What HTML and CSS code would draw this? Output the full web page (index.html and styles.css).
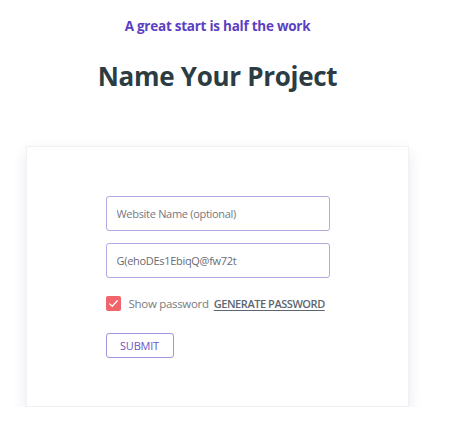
FILE: index.html
```html
<!DOCTYPE html>
<html lang="en">
<head>
<meta charset="utf-8">
<link rel="stylesheet" href="styles.css">
</head>
<body>
<div class="page">
  <p class="eyebrow">A great start is half the work</p>
  <h1 class="title">Name Your Project</h1>
  <div class="card">
    <form class="form">
      <input class="field" type="text" placeholder="Website Name (optional)">
      <input class="field field-value" type="text" value="G(ehoDEs1EbiqQ@fw72t">
      <div class="row">
        <span class="check"><svg viewBox="0 0 16 16" width="11" height="11"><path d="M2.5 8.5 L6.2 12 L13.5 4" fill="none" stroke="#fff" stroke-width="1.8" stroke-linecap="round" stroke-linejoin="round"/></svg></span>
        <span class="label">Show password</span>
        <a class="gen">GENERATE PASSWORD</a>
      </div>
      <button class="submit" type="button">SUBMIT</button>
    </form>
  </div>
</div>
</body>
</html>
```
FILE: styles.css
```css
* { box-sizing: border-box; }
html, body { margin: 0; padding: 0; background: #fff; }
body { font-family: "Open Sans", "Noto Sans", sans-serif; }
.page { width: 435px; display: flex; flex-direction: column; align-items: center; }
.eyebrow { margin: 16px 0 0; font-size: 13.5px; line-height: 20px; font-weight: 700; color: #5c3fbf; letter-spacing: -0.25px; }
.title { margin: 23px 0 0; font-size: 26px; line-height: 34px; font-weight: 700; color: #2b3c43; letter-spacing: -0.3px; }
.card { margin-top: 53px; width: 383px; height: 261px; border: 1px solid #f0f0f6; background: #fff; box-shadow: 0 6px 14px rgba(40, 40, 80, 0.1); display: flex; justify-content: center; padding-top: 49px; }
.form { width: 224px; display: flex; flex-direction: column; }
.field { width: 224px; height: 35px; border: 1px solid #b4a8e2; border-radius: 3px; padding: 0 10px; font-family: inherit; font-size: 11px; letter-spacing: -0.3px; color: #6b6b75; outline: none; }
.field::placeholder { color: #77777f; }
.field + .field { margin-top: 12px; }
.row { margin-top: 18px; display: flex; align-items: center; height: 15px; white-space: nowrap; }
.check { flex: none; width: 15px; height: 15px; background: #f0646b; border-radius: 2px; display: flex; align-items: center; justify-content: center; }
.label { margin-left: 8px; font-size: 11.5px; letter-spacing: -0.3px; color: #7a7a82; }
.gen { margin-left: 5px; font-size: 11px; font-weight: 600; letter-spacing: -0.45px; color: #5d6670; text-decoration: underline; text-underline-offset: 2px; }
.submit { margin-top: 22px; width: 68px; height: 25px; border: 1px solid #a393dc; border-radius: 3px; background: #fff; font-family: inherit; font-size: 11px; letter-spacing: -0.2px; color: #6d55c6; padding: 0; }
```
